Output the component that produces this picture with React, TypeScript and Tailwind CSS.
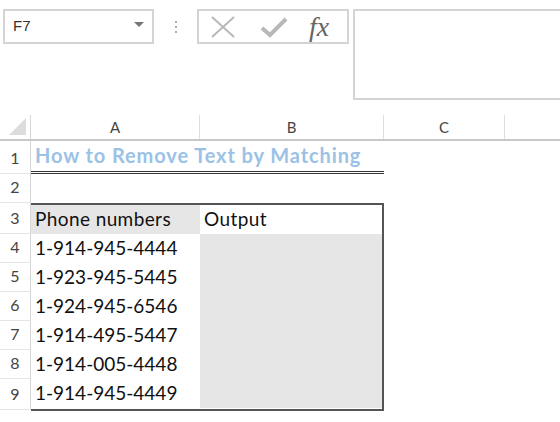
import React from 'react';

const phones = [
  '1-914-945-4444',
  '1-923-945-5445',
  '1-924-945-6546',
  '1-914-495-5447',
  '1-914-005-4448',
  '1-914-945-4449',
];

const font = { fontFamily: 'Lato, "Open Sans", sans-serif' };

function RowNum({ n, h }: { n: number | string; h: string }) {
  return (
    <div
      className={`${h} w-[31px] shrink-0 flex items-end justify-center pb-[3px] border-r border-b border-[#d6d6d6] border-b-[#e6e6e6] text-[16px] text-[#444]`}
    >
      {n}
    </div>
  );
}

export default function App() {
  return (
    <div className="w-[560px] h-[422px] bg-white overflow-hidden" style={font}>
      {/* Formula bar */}
      <div className="flex items-start pt-[9px] pl-[3px]">
        <div className="w-[151px] h-[35px] border-2 border-[#d4d4d4] flex items-center justify-between pl-[8px] pr-[8px]">
          <span className="text-[15px] text-[#333]" style={{ fontFamily: '"Liberation Sans", sans-serif' }}>F7</span>
          <span className="w-0 h-0 border-l-[5px] border-r-[5px] border-t-[5px] border-l-transparent border-r-transparent border-t-[#777] mb-[4px]" />
        </div>
        <div className="w-[43px] h-[35px] flex flex-col items-center justify-center gap-[3px]">
          <span className="w-[2px] h-[2px] bg-[#aaa]" />
          <span className="w-[2px] h-[2px] bg-[#aaa]" />
          <span className="w-[2px] h-[2px] bg-[#aaa]" />
        </div>
        <div className="w-[152px] h-[35px] border-2 border-[#d4d4d4] flex items-center">
          <svg width="26" height="22" viewBox="0 0 26 22" className="ml-[11px]">
            <path d="M2 1 L24 21 M24 1 L2 21" stroke="#b8b8b8" strokeWidth="2" fill="none" />
          </svg>
          <svg width="28" height="22" viewBox="0 0 28 22" className="ml-[24px]">
            <path d="M2 12 L10 19 L26 3" stroke="#b8b8b8" strokeWidth="4" fill="none" />
          </svg>
          <span
            className="ml-[21px] text-[28px] italic text-[#666] leading-none"
            style={{ fontFamily: '"Liberation Serif", serif' }}
          >
            fx
          </span>
        </div>
        <div className="ml-[4px] flex-1 h-[91px] border-2 border-r-0 border-[#d4d4d4]" />
      </div>

      {/* Column headers */}
      <div className="mt-[15px] flex h-[26px] border-b-2 border-[#c8c8c8]">
        <div className="w-[31px] shrink-0 border-r border-[#d6d6d6] flex items-end justify-end pr-[4px] pb-[4px]">
          <svg width="17" height="17" viewBox="0 0 17 17">
            <polygon points="17,0 17,17 0,17" fill="#dcdcdc" />
          </svg>
        </div>
        {[
          ['A', 'w-[169px]'],
          ['B', 'w-[184px]'],
          ['C', 'w-[121px]'],
        ].map(([l, w]) => (
          <div key={l} className={`${w} shrink-0 border-r border-[#dedede] flex items-center justify-center text-[15px] text-[#444]`}>
            {l}
          </div>
        ))}
        <div className="flex-1" />
      </div>

      {/* Row 1 */}
      <div className="flex">
        <RowNum n={1} h="h-[33px]" />
        <div className="w-[353px] h-[33px] border-b-[3px] border-double border-[#333] flex items-end pl-[4px] pb-[1px]">
          <span className="text-[20px] font-bold tracking-[0.9px] text-[#9bc2e6]">How to Remove Text by Matching</span>
        </div>
      </div>

      {/* Row 2 */}
      <div className="flex">
        <RowNum n={2} h="h-[29px]" />
      </div>

      {/* Table rows 3-9 */}
      <div className="flex">
        <div className="flex flex-col">
          <RowNum n={3} h="h-[31px]" />
          {phones.map((_, i) => (
            <RowNum key={i} n={i + 4} h={i === phones.length - 1 ? 'h-[31px]' : 'h-[29px]'} />
          ))}
        </div>
        <div className="w-[353px] border-t-2 border-r-2 border-b-2 border-[#555] flex flex-col h-[208px]">
          <div className="flex h-[29px] text-[19px] text-[#111]">
            <div className="w-[169px] bg-[#e6e6e6] flex items-end pl-[4px] pb-[1px] tracking-[0.4px]">Phone numbers</div>
            <div className="flex-1 bg-white flex items-end pl-[4px] pb-[1px] tracking-[0.4px]">Output</div>
          </div>
          {phones.map((p) => (
            <div key={p} className="flex h-[29px] text-[19px] text-[#111]">
              <div className="w-[169px] bg-white flex items-end pl-[4px] pb-[1px]">{p}</div>
              <div className="flex-1 bg-[#e6e6e6]" />
            </div>
          ))}
        </div>
      </div>
    </div>
  );
}
